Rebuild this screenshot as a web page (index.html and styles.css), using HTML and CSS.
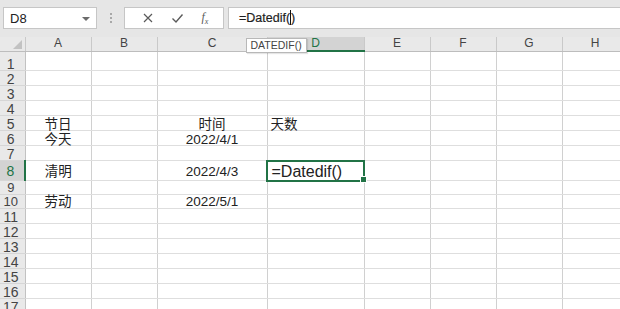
FILE: index.html
```html
<!DOCTYPE html>
<html lang="zh-CN">
<head>
    <meta charset="UTF-8">
    <title>Datedif</title>
    <link rel="stylesheet" href="styles.css">
</head>
<body>
    <div class="toolbar">
        <div class="namebox">
            <span>D8</span>
            <svg class="drop" width="8" height="4" viewBox="0 0 8 4"><path d="M0 0h8L4 4z" fill="#6b6b6b"/></svg>
        </div>
        <div class="grip"><i></i><i></i><i></i></div>
        <div class="fbuttons">
            <svg width="12" height="12" viewBox="0 0 12 12"><path d="M2 2l8 8M10 2l-8 8" stroke="#5a5a5a" stroke-width="1.2" fill="none"/></svg>
            <svg width="13" height="12" viewBox="0 0 13 12"><path d="M1.5 6.5l3.5 3.5 6.5-7.5" stroke="#5a5a5a" stroke-width="1.4" fill="none"/></svg>
            <span class="fx">f<sub>x</sub></span>
        </div>
        <div class="formula">=Datedif(<span class="caret"></span>)</div>
    </div>

    <table class="sheet">
        <colgroup>
            <col class="c-head">
            <col class="c-a">
            <col class="c-b">
            <col class="c-c">
            <col class="c-d">
            <col class="c-e">
            <col class="c-f">
            <col class="c-g">
            <col class="c-h">
        </colgroup>
        <thead>
            <tr class="r-head">
                <th class="corner"><span class="tri"></span></th>
                <th>A</th>
                <th>B</th>
                <th>C</th>
                <th class="active-col">D<span class="tip">DATEDIF()</span></th>
                <th>E</th>
                <th>F</th>
                <th>G</th>
                <th>H</th>
            </tr>
        </thead>
        <tbody>
            <tr class="r1"><th>1</th><td></td><td></td><td></td><td></td><td></td><td></td><td></td><td></td></tr>
            <tr><th>2</th><td></td><td></td><td></td><td></td><td></td><td></td><td></td><td></td></tr>
            <tr><th>3</th><td></td><td></td><td></td><td></td><td></td><td></td><td></td><td></td></tr>
            <tr><th>4</th><td></td><td></td><td></td><td></td><td></td><td></td><td></td><td></td></tr>
            <tr><th>5</th><td class="mid">节日</td><td></td><td class="mid">时间</td><td>天数</td><td></td><td></td><td></td><td></td></tr>
            <tr><th>6</th><td class="mid">今天</td><td></td><td class="mid">2022/4/1</td><td></td><td></td><td></td><td></td><td></td></tr>
            <tr><th>7</th><td></td><td></td><td></td><td></td><td></td><td></td><td></td><td></td></tr>
            <tr class="r8"><th class="active-row">8</th><td class="mid">清明</td><td></td><td class="mid">2022/4/3</td><td class="selected">=Datedif()<span class="handle"></span></td><td></td><td></td><td></td><td></td></tr>
            <tr class="r-short"><th>9</th><td></td><td></td><td></td><td></td><td></td><td></td><td></td><td></td></tr>
            <tr class="r-short"><th>10</th><td class="mid">劳动</td><td></td><td class="mid">2022/5/1</td><td></td><td></td><td></td><td></td><td></td></tr>
            <tr><th>11</th><td></td><td></td><td></td><td></td><td></td><td></td><td></td><td></td></tr>
            <tr><th>12</th><td></td><td></td><td></td><td></td><td></td><td></td><td></td><td></td></tr>
            <tr><th>13</th><td></td><td></td><td></td><td></td><td></td><td></td><td></td><td></td></tr>
            <tr><th>14</th><td></td><td></td><td></td><td></td><td></td><td></td><td></td><td></td></tr>
            <tr><th>15</th><td></td><td></td><td></td><td></td><td></td><td></td><td></td><td></td></tr>
            <tr><th>16</th><td></td><td></td><td></td><td></td><td></td><td></td><td></td><td></td></tr>
            <tr><th>17</th><td></td><td></td><td></td><td></td><td></td><td></td><td></td><td></td></tr>
        </tbody>
    </table>
</body>
</html>
```

FILE: styles.css
```css
body {
    margin: 0;
    overflow: hidden;
    background-color: #fff;
    font-family: "Liberation Sans", "Noto Sans CJK SC", sans-serif;
    color: #222;
}

.toolbar {
    height: 37px;
    background-color: #e6e6e6;
    display: flex;
    align-items: flex-start;
    padding-top: 7px;
    box-sizing: border-box;
}

.namebox {
    margin-left: 3px;
    width: 94px;
    height: 22px;
    background-color: #fff;
    border: 1px solid #c6c6c6;
    box-sizing: border-box;
    display: flex;
    align-items: center;
    justify-content: space-between;
    padding: 0 6px 0 6px;
    font-size: 13px;
    color: #222;
}

.drop {
    margin-top: 1px;
}

.grip {
    width: 27px;
    height: 22px;
    display: flex;
    flex-direction: column;
    align-items: center;
    justify-content: center;
    gap: 2px;
}

.grip i {
    width: 2px;
    height: 2px;
    background-color: #a8a8a8;
}

.fbuttons {
    width: 100px;
    height: 22px;
    background-color: #fff;
    border: 1px solid #c6c6c6;
    box-sizing: border-box;
    display: flex;
    align-items: center;
    justify-content: space-around;
    padding: 0 6px 0 8px;
}

.fx {
    font-family: "Liberation Serif", serif;
    font-style: italic;
    font-size: 12px;
    color: #5a5a5a;
}

.fx sub {
    font-size: 8px;
}

.formula {
    flex: 1;
    margin-left: 4px;
    height: 22px;
    background-color: #fff;
    border: 1px solid #c6c6c6;
    border-right: none;
    box-sizing: border-box;
    padding-left: 10px;
    font-size: 12.5px;
    line-height: 20px;
    color: #1e1e1e;
    -webkit-text-stroke: 0.2px #1e1e1e;
}

.caret {
    display: inline-block;
    width: 1px;
    height: 15px;
    background-color: #111;
    vertical-align: -3px;
}

.sheet {
    border-collapse: collapse;
    table-layout: fixed;
    width: 628px;
}

.c-head { width: 25px; }
.c-a, .c-b, .c-e, .c-f, .c-g, .c-h { width: 66px; }
.c-c { width: 110px; }
.c-d { width: 97px; }

.sheet th,
.sheet td {
    padding: 0;
    border-top: 1px solid #dedede;
    border-bottom: 1px solid #dedede;
    border-left: 1px solid #d0d0d0;
    border-right: 1px solid #d0d0d0;
    height: 14px;
    line-height: 11px;
    vertical-align: bottom;
    white-space: nowrap;
    overflow: visible;
    font-size: 13.5px;
    font-weight: normal;
}

.sheet thead th {
    background-color: #e9e9e9;
    height: 13px;
    line-height: 13px;
    font-size: 12px;
    color: #444;
    text-align: center;
    vertical-align: middle;
    border-top: none;
    border-left-color: #c9c9c9;
    border-right-color: #c9c9c9;
    border-bottom: 1px solid #bdbdbd;
    position: relative;
}

.sheet thead th.corner {
    border-left: none;
}

.tri {
    position: absolute;
    right: 3px;
    bottom: 2px;
    width: 0;
    height: 0;
    border-left: 9px solid transparent;
    border-bottom: 9px solid #c2c2c2;
}

.sheet thead th.active-col {
    background-color: #d3d3d3;
    color: #217346;
    border-bottom: 2px solid #217346;
}

.tip {
    position: absolute;
    left: -22px;
    top: 1px;
    background-color: #fff;
    border: 1px solid #b8b8b8;
    padding: 0 4px;
    font-size: 10.5px;
    line-height: 13px;
    color: #444;
    box-shadow: 1px 1px 1px rgba(0, 0, 0, 0.1);
}

.sheet tbody th {
    background-color: #e9e9e9;
    color: #444;
    font-size: 14px;
    text-align: center;
    padding-right: 3px;
    border-left: none;
    border-right-color: #c2c2c2;
    border-top-color: #d6d6d6;
    border-bottom-color: #d6d6d6;
}

.sheet tbody th.active-row {
    background-color: #d3d3d3;
    color: #217346;
    border-right: 2px solid #217346;
}

.r1 th,
.r1 td {
    height: 18px;
}

.r8 th,
.r8 td {
    height: 19px;
    line-height: 17px;
}

.r-short th,
.r-short td {
    height: 13px;
    line-height: 12px;
}

.sheet tbody .r-short th {
    font-size: 13px;
}

.sheet td {
    padding-left: 3px;
}

.sheet td.mid {
    text-align: center;
    padding-left: 0;
}

.sheet td.selected {
    position: relative;
    outline: 2px solid #217346;
    outline-offset: -1px;
    font-size: 16px;
    padding-left: 4px;
}

.handle {
    position: absolute;
    right: -3px;
    bottom: -3px;
    width: 5px;
    height: 5px;
    background-color: #217346;
    border: 1px solid #fff;
}
```
